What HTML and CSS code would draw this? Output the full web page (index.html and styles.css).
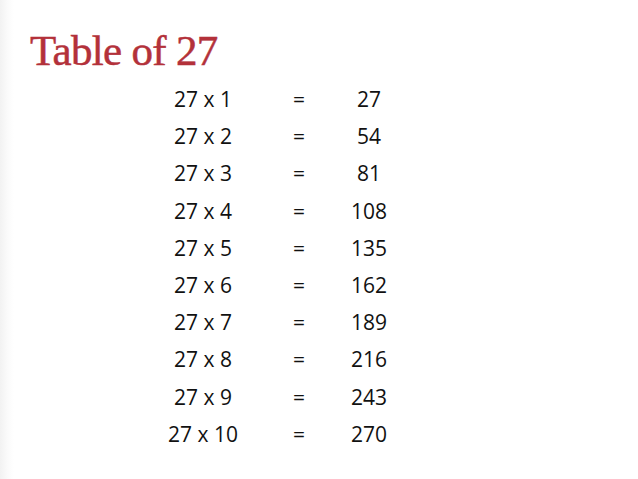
FILE: index.html
```html
<!DOCTYPE html>
<html>
<head>
<meta charset="utf-8">
<link rel="stylesheet" href="styles.css">
</head>
<body>
<div class="slide">
  <h1 class="title">Table of 27</h1>
  <div class="table">
    <span>27 x 1</span><span>=</span><span>27</span>
    <span>27 x 2</span><span>=</span><span>54</span>
    <span>27 x 3</span><span>=</span><span>81</span>
    <span>27 x 4</span><span>=</span><span>108</span>
    <span>27 x 5</span><span>=</span><span>135</span>
    <span>27 x 6</span><span>=</span><span>162</span>
    <span>27 x 7</span><span>=</span><span>189</span>
    <span>27 x 8</span><span>=</span><span>216</span>
    <span>27 x 9</span><span>=</span><span>243</span>
    <span>27 x 10</span><span>=</span><span>270</span>
  </div>
</div>
</body>
</html>
```

FILE: styles.css
```css
html, body {
  margin: 0;
  padding: 0;
  background: #ffffff;
}
.slide {
  width: 638px;
  height: 479px;
  overflow: hidden;
  padding-top: 26px;
  box-sizing: border-box;
  background: linear-gradient(90deg, #f2f2f2 0px, #fbfbfb 8px, #ffffff 14px);
}
.title {
  margin: 0 0 0 30px;
  font-family: "Liberation Serif", "Times New Roman", serif;
  font-weight: normal;
  font-size: 43px;
  letter-spacing: -0.7px;
  line-height: 50px;
  color: #b3313a;
  -webkit-text-stroke: 0.5px #b3313a;
}
.table {
  display: grid;
  grid-template-columns: 120px 72px 68px;
  grid-auto-rows: 37.2px;
  margin: 5px 0 0 143px;
  font-family: "Open Sans", "Liberation Sans", sans-serif;
  font-size: 21px;
  line-height: 37px;
  color: #111111;
  text-align: center;
}
```
